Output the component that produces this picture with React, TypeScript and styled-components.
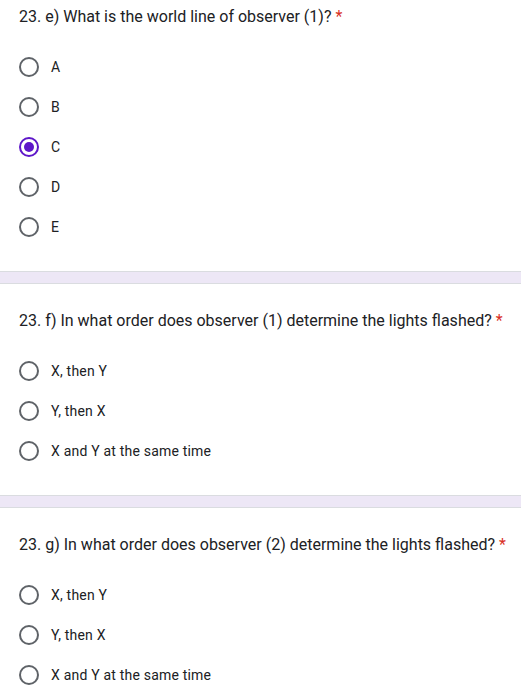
import React from "react";
import styled, { createGlobalStyle } from "styled-components";

const GlobalStyle = createGlobalStyle`
  body {
    margin: 0;
    background: #ffffff;
    font-family: Roboto, "Liberation Sans", Arial, sans-serif;
    color: #202124;
  }
`;

const Page = styled.div`
  width: 521px;
`;

const Section = styled.div<{ $first?: boolean }>`
  padding: ${(p) => (p.$first ? "5px" : "25px")} 0 24px 19px;
`;

const Title = styled.div`
  font-size: 16px;
  line-height: 24px;
  letter-spacing: 0;
  color: #202124;
  margin-bottom: 18px;
`;

const Required = styled.span`
  color: #d93025;
  margin-left: 4px;
`;

const OptionList = styled.div`
  display: flex;
  flex-direction: column;
`;

const OptionRow = styled.label`
  display: flex;
  align-items: center;
  height: 40px;
  font-size: 14px;
  color: #202124;
  letter-spacing: 0.2px;
`;

const Radio = styled.span<{ $checked?: boolean }>`
  box-sizing: border-box;
  width: 20px;
  height: 20px;
  border-radius: 50%;
  border: 2px solid ${(p) => (p.$checked ? "#5e17c9" : "#5f6368")};
  display: flex;
  align-items: center;
  justify-content: center;
  margin-right: 12px;
  flex-shrink: 0;

  &::after {
    content: "";
    display: ${(p) => (p.$checked ? "block" : "none")};
    width: 10px;
    height: 10px;
    border-radius: 50%;
    background: #5e17c9;
  }
`;

const Divider = styled.div`
  height: 11px;
  background: #ede7f6;
  border-top: 1px solid #dadce0;
  border-bottom: 1px solid #dadce0;
`;

type Question = {
  title: string;
  options: string[];
  selected?: number;
};

const questions: Question[] = [
  {
    title: "23. e) What is the world line of observer (1)?",
    options: ["A", "B", "C", "D", "E"],
    selected: 2,
  },
  {
    title: "23. f) In what order does observer (1) determine the lights flashed?",
    options: ["X, then Y", "Y, then X", "X and Y at the same time"],
  },
  {
    title: "23. g) In what order does observer (2) determine the lights flashed?",
    options: ["X, then Y", "Y, then X", "X and Y at the same time"],
  },
];

export default function App() {
  return (
    <Page>
      <GlobalStyle />
      {questions.map((q, i) => (
        <React.Fragment key={q.title}>
          {i > 0 && <Divider />}
          <Section $first={i === 0}>
            <Title>
              {q.title}
              <Required>*</Required>
            </Title>
            <OptionList>
              {q.options.map((opt, j) => (
                <OptionRow key={opt}>
                  <Radio $checked={q.selected === j} />
                  {opt}
                </OptionRow>
              ))}
            </OptionList>
          </Section>
        </React.Fragment>
      ))}
    </Page>
  );
}
